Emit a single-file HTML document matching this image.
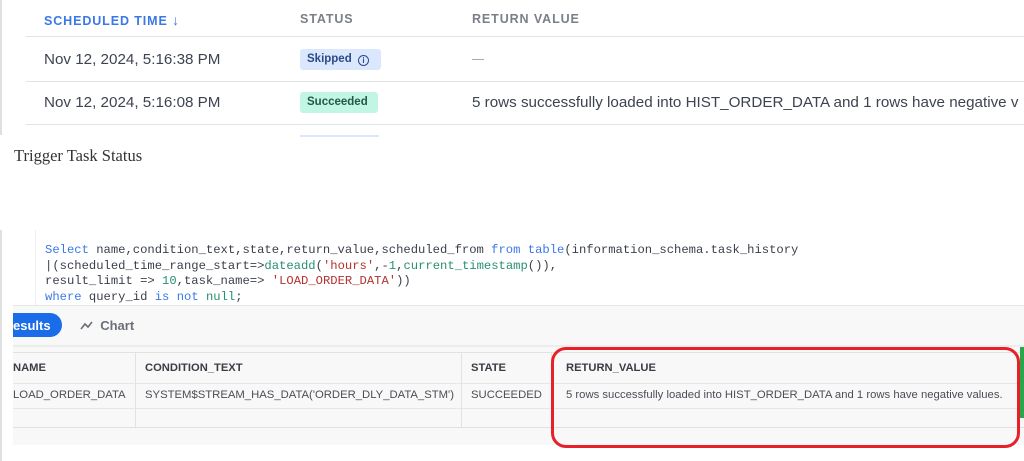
<!DOCTYPE html>
<html><head><style>
*{margin:0;padding:0;box-sizing:border-box}
body{width:1024px;height:461px;background:#fff;position:relative;overflow:hidden;font-family:"Liberation Sans",sans-serif}
.a{position:absolute}
.hd{font-size:12.5px;font-weight:bold;letter-spacing:.9px;color:#7a7f88}
.row{font-size:15.2px;color:#3d4350;white-space:nowrap}
.hl{height:1px;background:#dfe2e8;left:26px;right:0}
.code{font-family:"Liberation Mono",monospace;font-size:12.2px;color:#3a3f4a;left:45px;line-height:15.5px;white-space:pre}
.kw{color:#3b78e7}.fn{color:#279073}.st{color:#b2322e}
.th{font-size:11.2px;font-weight:bold;color:#3a3d44}
.td{font-size:11.3px;color:#4a4d55;white-space:nowrap}
.vl{width:1px;background:#e2e2e2}
</style></head><body>
<div class="a" style="left:0;top:0;width:2px;height:135px;background:#e0e0e0"></div>
<div class="a hd" style="left:44px;top:12px;color:#3b78e7">SCHEDULED TIME <span style="font-size:14px">&#8595;</span></div>
<div class="a hd" style="left:300px;top:12px">STATUS</div>
<div class="a hd" style="left:472px;top:12px">RETURN VALUE</div>
<div class="a hl" style="top:36px"></div>
<div class="a row" style="left:44px;top:51px">Nov 12, 2024, 5:16:38 PM</div>
<div class="a" style="left:300px;top:49px;width:81px;height:21px;background:#dbe7fd;border-radius:3px;font-size:11.5px;font-weight:bold;color:#2b4a8a;padding:4px 0 0 7px">Skipped <span style="display:inline-block;width:11px;height:11px;border:1px solid #2b4a8a;border-radius:50%;font-size:8px;text-align:center;line-height:9px;vertical-align:-1px;margin-left:3px">i</span></div>
<div class="a" style="left:472px;top:59px;width:12px;height:1px;background:#aaa"></div>
<div class="a hl" style="top:81px"></div>
<div class="a row" style="left:44px;top:94px">Nov 12, 2024, 5:16:08 PM</div>
<div class="a" style="left:300px;top:92px;width:78px;height:21px;background:#c1f5e4;border-radius:3px;font-size:11.5px;font-weight:bold;color:#1f5a45;padding:4px 0 0 7px">Succeeded</div>
<div class="a row" style="left:472px;top:94px">5 rows successfully loaded into HIST_ORDER_DATA and 1 rows have negative v</div>
<div class="a hl" style="top:124px"></div>
<div class="a" style="left:300px;top:135px;width:79px;height:2px;background:#dbe7fd"></div>
<div class="a" style="left:14px;top:146px;font-family:'Liberation Serif',serif;font-size:16.5px;color:#333">Trigger Task Status</div>

<div class="a" style="left:0;top:230px;width:2px;height:231px;background:#e0e0e0"></div>
<div class="a vl" style="left:35px;top:230px;height:75px;background:#eee"></div>
<div class="a code" style="top:243px"><span class="kw">Select</span> name,condition_text,state,return_value,scheduled_from <span class="kw">from</span> <span class="kw">table</span>(information_schema.task_history
|(scheduled_time_range_start=&gt;<span class="fn">dateadd</span>(<span class="st">'hours'</span>,-<span class="fn">1</span>,<span class="fn">current_timestamp</span>()),
result_limit =&gt; <span class="fn">10</span>,task_name=&gt; <span class="st">'LOAD_ORDER_DATA'</span>))
<span class="kw">where</span> query_id <span class="kw">is</span> <span class="kw">not</span> <span class="fn">null</span>;</div>

<div class="a" style="left:13px;top:305px;width:1011px;height:140px;background:#f8f8f8"></div>
<div class="a" style="left:13px;top:305px;width:1011px;height:1px;background:#e6e6e6"></div>
<div class="a" style="left:13px;top:313px;width:49px;height:24px;background:#1a6ce8;border-radius:0 12px 12px 0;color:#fff;font-size:13px;font-weight:bold;padding:5px 0 0 0">esults</div>
<div class="a" style="left:80px;top:318px;font-size:13px;font-weight:bold;color:#6a6f78"><svg width="13" height="10" viewBox="0 0 13 10" style="vertical-align:-1px"><path d="M1 8 L5 3 L8 6 L12 1" fill="none" stroke="#6a6f78" stroke-width="1.6"/></svg>&nbsp; Chart</div>
<div class="a" style="left:13px;top:345px;width:1011px;height:2px;background:#ececec"></div>
<div class="a" style="left:13px;top:352px;width:1011px;height:1px;background:#e2e2e2"></div>
<div class="a" style="left:13px;top:383px;width:1011px;height:1px;background:#e6e6e6"></div>
<div class="a" style="left:13px;top:408px;width:1011px;height:1px;background:#e6e6e6"></div>
<div class="a" style="left:13px;top:427px;width:1011px;height:1px;background:#e0e0e0"></div>
<div class="a vl" style="left:135px;top:352px;height:75px"></div>
<div class="a vl" style="left:461px;top:352px;height:75px"></div>
<div class="a vl" style="left:551px;top:352px;height:75px"></div>
<div class="a th" style="left:13px;top:362px">NAME</div>
<div class="a th" style="left:145px;top:362px">CONDITION_TEXT</div>
<div class="a th" style="left:471px;top:362px">STATE</div>
<div class="a th" style="left:566px;top:362px">RETURN_VALUE</div>
<div class="a td" style="left:13px;top:389px">LOAD_ORDER_DATA</div>
<div class="a td" style="left:145px;top:389px">SYSTEM$STREAM_HAS_DATA('ORDER_DLY_DATA_STM')</div>
<div class="a td" style="left:471px;top:389px">SUCCEEDED</div>
<div class="a td" style="left:566px;top:389px">5 rows successfully loaded into HIST_ORDER_DATA and 1 rows have negative values.</div>
<div class="a" style="left:1020px;top:347px;width:4px;height:71px;background:#2aa64a"></div>
<div class="a" style="left:551px;top:347px;width:469px;height:101px;border:3px solid #e8202a;border-radius:15px"></div>
</body></html>
